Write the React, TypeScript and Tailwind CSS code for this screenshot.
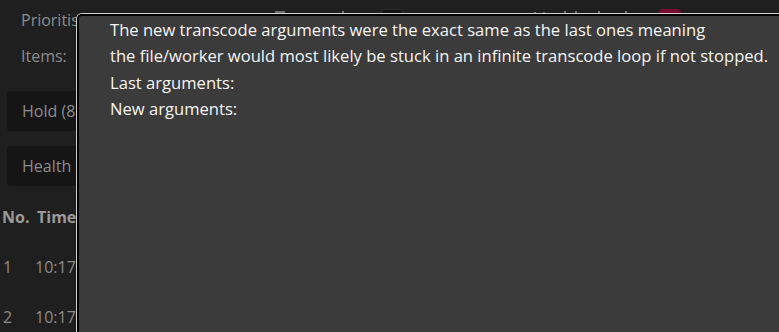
import React from "react";

export default function App() {
  const font = { fontFamily: '"Open Sans", "Noto Sans", sans-serif' };
  return (
    <div
      className="relative w-[779px] h-[332px] overflow-hidden bg-[#1f1f1f] text-[16px] text-[#8c8c8c]"
      style={font}
    >
      {/* background page */}
      <div className="flex flex-col">
        <div className="flex items-start h-[42px]">
          <div className="pl-[21px] pt-[8px] w-[256px] shrink-0">Prioritise</div>
          <div className="flex items-start pt-[10px]">
            <span className="shrink-0 mt-[1px] ml-[19px] w-[10px] h-[3px] bg-[#6f6f6f]" />
            <span className="shrink-0 mt-[1px] ml-[57px] w-[2px] h-[3px] bg-[#7a6f80]" />
            <span className="shrink-0 -mt-[1px] ml-[37px] w-[22px] h-[21px] rounded-[3px] bg-[#121212] border border-[#2e2e2e]" />
            <span className="shrink-0 mt-[2px] ml-[131px] w-[2px] h-[2px] bg-[#6f6f6f]" />
            <span className="shrink-0 mt-[2px] ml-[7px] w-[2px] h-[2px] bg-[#6f6f6f]" />
            <span className="shrink-0 mt-[1px] ml-[19px] w-[2px] h-[3px] bg-[#7a7a6a]" />
            <span className="shrink-0 mt-[1px] ml-[9px] w-[2px] h-[3px] bg-[#7a7a6a]" />
            <span className="shrink-0 mt-[1px] ml-[21px] w-[2px] h-[3px] bg-[#6f7a7a]" />
            <span className="shrink-0 mt-[1px] ml-[25px] w-[2px] h-[3px] bg-[#7a7a6a]" />
            <span className="shrink-0 -mt-[1px] ml-[32px] w-[22px] h-[20px] rounded-[4px] bg-[#7a0c33]" />
          </div>
        </div>
        <div className="pl-[21px] h-[49px] pt-[2px] leading-[24px]">Items:</div>
        <div className="pl-[7px] flex flex-col gap-[15px]">
          <div className="w-[200px] h-[40px] rounded-[4px] bg-[#151515] pl-[15px] flex items-center">Hold (8)</div>
          <div className="w-[200px] h-[40px] rounded-[4px] bg-[#151515] pl-[15px] flex items-center">Health check</div>
        </div>
        <div className="flex pl-[2px] pt-[19px] font-bold text-[#9a9a9a] leading-[24px]">
          <span className="w-[35px]">No.</span>
          <span>Time</span>
        </div>
        <div className="flex pl-[3px] pt-[26px] leading-[24px]">
          <span className="w-[32px]">1</span>
          <span>10:17</span>
        </div>
        <div className="flex pl-[3px] pt-[26px] leading-[24px]">
          <span className="w-[32px]">2</span>
          <span>10:17</span>
        </div>
      </div>

      {/* tooltip overlay */}
      <div className="absolute left-[76px] top-[13px] w-[760px] h-[340px] rounded-tl-[6px] border-t border-l border-[#cfcfcf] bg-[#000]">
        <div className="h-full rounded-tl-[5px] border-t-2 border-l-2 border-black bg-[#3b3b3b] pl-[31px] pt-[1px] text-[#f5f5f5] text-[16.6px] leading-[26.4px]">
          <div>The new transcode arguments were the exact same as the last ones meaning</div>
          <div>the file/worker would most likely be stuck in an infinite transcode loop if not stopped.</div>
          <div>Last arguments:</div>
          <div>New arguments:</div>
        </div>
      </div>
    </div>
  );
}
